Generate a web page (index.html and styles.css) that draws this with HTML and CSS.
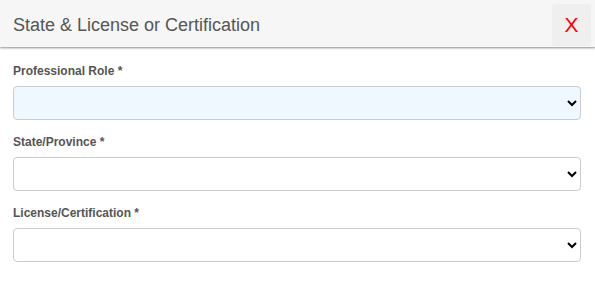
FILE: index.html
```html
<!DOCTYPE html>
<html>
<head>
<meta charset="utf-8">
<link rel="stylesheet" href="styles.css">
</head>
<body>
<div class="modal">
  <div class="modal-header">
    <h1 class="modal-title">State &amp; License or Certification</h1>
    <button class="close-btn" type="button">X</button>
  </div>
  <div class="modal-body">
    <div class="field">
      <label class="field-label">Professional Role *</label>
      <select class="field-select field-select--active"><option></option></select>
    </div>
    <div class="field">
      <label class="field-label">State/Province *</label>
      <select class="field-select"><option></option></select>
    </div>
    <div class="field">
      <label class="field-label">License/Certification *</label>
      <select class="field-select"><option></option></select>
    </div>
  </div>
</div>
</body>
</html>
```
FILE: styles.css
```css
html, body {
  margin: 0;
  padding: 0;
  background: #fff;
  font-family: "Liberation Sans", Arial, sans-serif;
}
.modal {
  width: 595px;
  height: 282px;
  background: #fff;
  overflow: hidden;
}
.modal-header {
  height: 47px;
  background: #f6f6f6;
  display: flex;
  align-items: center;
  justify-content: space-between;
  padding: 0 4px 0 13px;
  box-shadow: 0 1px 2px rgba(0,0,0,0.45);
  position: relative;
}
.modal-title {
  margin: 0;
  padding-top: 3px;
  font-size: 18px;
  font-weight: normal;
  color: #555;
}
.close-btn {
  width: 39px;
  height: 42px;
  border: none;
  border-radius: 4px;
  background: #efefef;
  color: #f00;
  font-family: "Liberation Sans", Arial, sans-serif;
  font-size: 21px;
  padding: 0;
  margin-top: 2px;
}
.modal-body {
  padding: 18px 14px 0 13px;
  display: flex;
  flex-direction: column;
  gap: 16px;
}
.field {
  display: flex;
  flex-direction: column;
  gap: 8px;
}
.field-label {
  font-size: 12px;
  font-weight: bold;
  color: #555;
  line-height: 13px;
}
.field-select {
  height: 34px;
  width: 100%;
  border: 1px solid #ccc;
  border-radius: 4px;
  background-color: #fff;
  font-size: 14px;
}
.field-select--active {
  background-color: #f0f8ff;
}
```
